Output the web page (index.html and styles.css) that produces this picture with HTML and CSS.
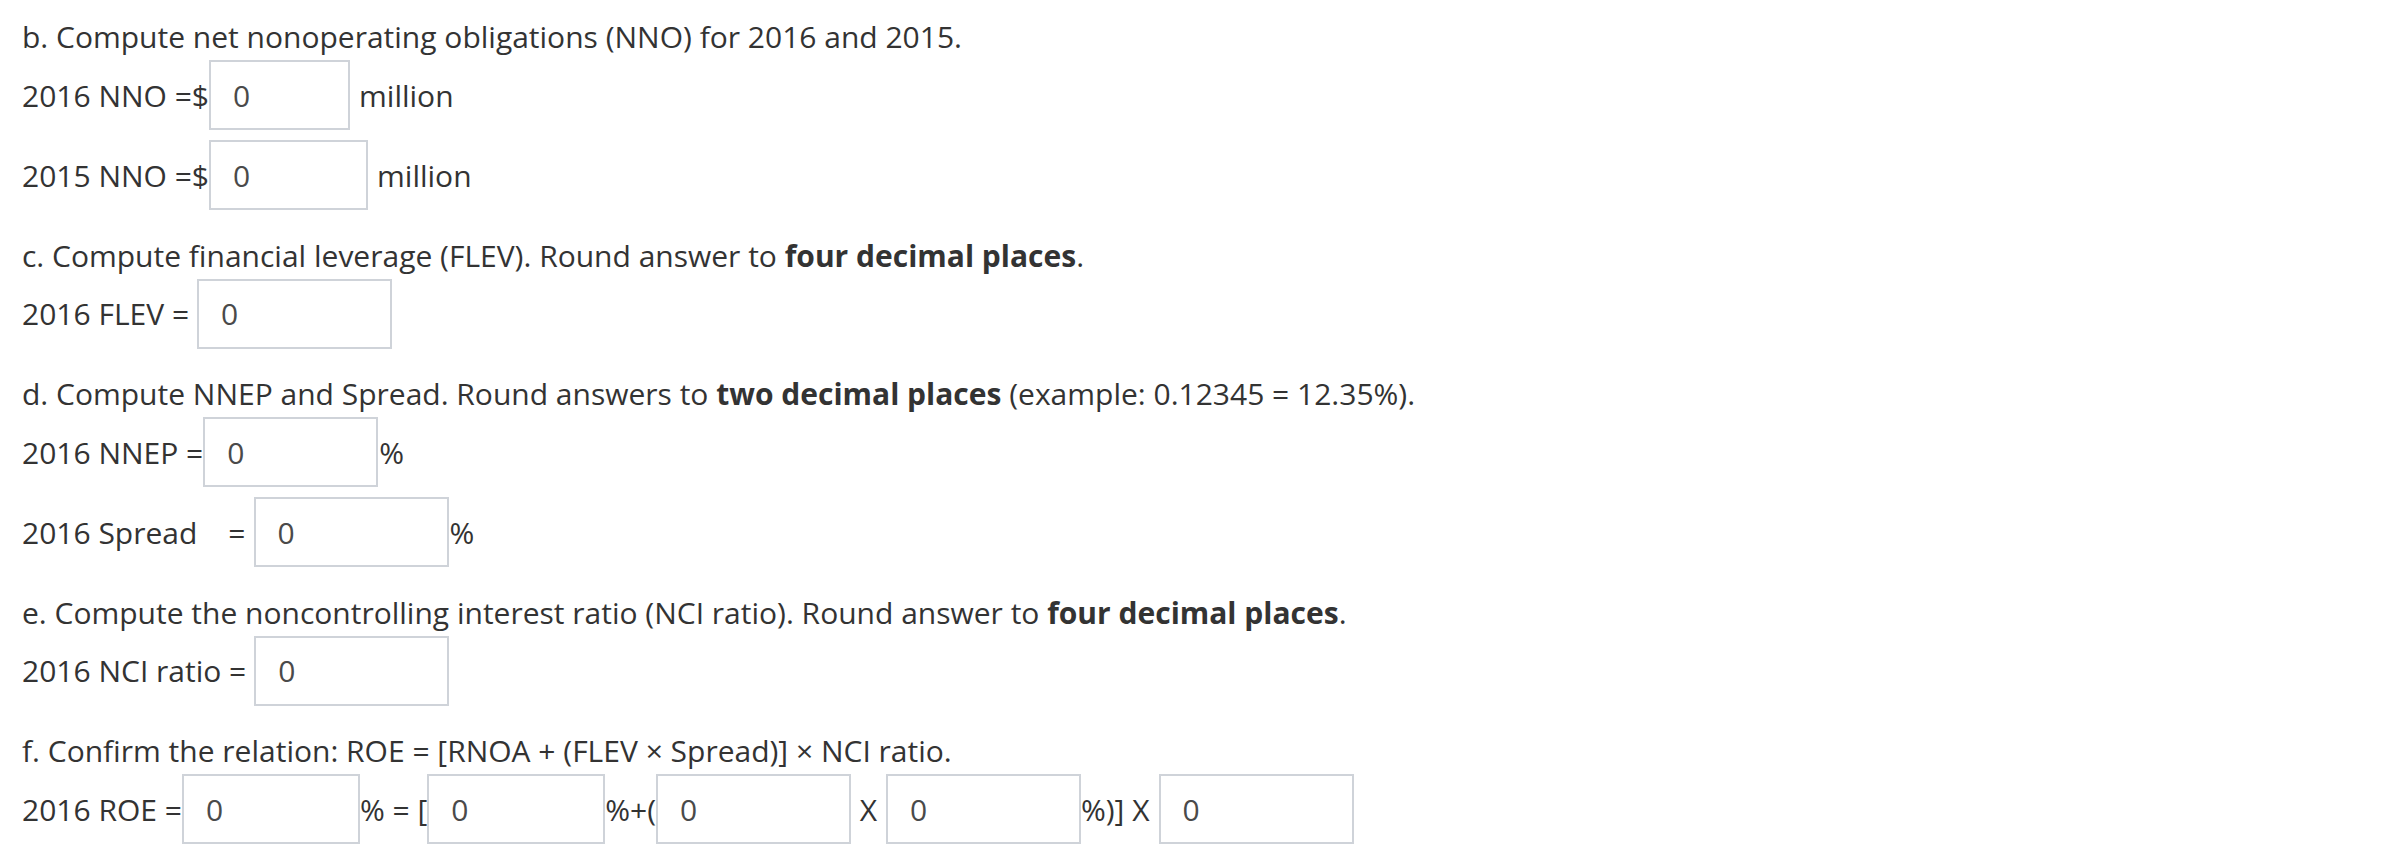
FILE: index.html
```html
<!DOCTYPE html>
<html>
<head>
<meta charset="utf-8">
<link rel="stylesheet" href="styles.css">
</head>
<body>
<div class="page">
  <section class="part">
    <div class="q">b. Compute net nonoperating obligations (NNO) for 2016 and 2015.</div>
    <div class="row"><span class="lbl">2016 NNO =$</span><input class="box w141" value="0"><span class="after">million</span></div>
    <div class="row"><span class="lbl">2015 NNO =$</span><input class="box w159" value="0"><span class="after">million</span></div>
  </section>
  <section class="part">
    <div class="q">c. Compute financial leverage (FLEV). Round answer to <b>four decimal places</b>.</div>
    <div class="row"><span class="lbl">2016 FLEV =</span><input class="box w195 gap" value="0"></div>
  </section>
  <section class="part">
    <div class="q">d. Compute NNEP and Spread. Round answers to <b>two decimal places</b> (example: 0.12345 = 12.35%).</div>
    <div class="row"><span class="lbl">2016 NNEP =</span><input class="box w175" value="0"><span class="after0">%</span></div>
    <div class="row"><span class="lbl">2016 Spread</span><span class="eq">=</span><input class="box w195 gap" value="0"><span class="after0">%</span></div>
  </section>
  <section class="part">
    <div class="q">e. Compute the noncontrolling interest ratio (NCI ratio). Round answer to <b>four decimal places</b>.</div>
    <div class="row"><span class="lbl">2016 NCI ratio =</span><input class="box w195 gap" value="0"></div>
  </section>
  <section class="part">
    <div class="q">f. Confirm the relation: ROE = [RNOA + (FLEV × Spread)] × NCI ratio.</div>
    <div class="row"><span class="lbl">2016 ROE =</span><input class="box w178" value="0"><span class="mid">% = [</span><input class="box w178" value="0"><span class="mid">%+(</span><input class="box w195" value="0"><span class="mid x">&nbsp;X&nbsp;</span><input class="box w195" value="0"><span class="mid last">%)] X</span><input class="box w195" value="0"></div>
  </section>
</div>
</body>
</html>
```

FILE: styles.css
```css
html, body {
  margin: 0;
  padding: 0;
  background: #ffffff;
}

.page {
  padding: 17px 0 0 22px;
  font-family: "Open Sans", "Noto Sans", sans-serif;
  font-size: 30px;
  color: #333333;
  display: flex;
  flex-direction: column;
  gap: 25.5px;
}

.part {
  display: flex;
  flex-direction: column;
  gap: 10px;
}

.q {
  line-height: 40px;
  height: 40px;
  margin-bottom: -7px;
  white-space: nowrap;
}

.q b {
  font-weight: 700;
}

.row {
  display: flex;
  align-items: center;
  height: 70px;
  white-space: pre;
}

.box {
  box-sizing: border-box;
  flex: none;
  height: 70px;
  border: 2px solid #cfd3d9;
  border-radius: 0;
  background: #ffffff;
  font-family: inherit;
  font-size: 30px;
  color: #4a4a4a;
  padding: 0 22px;
  margin: 0;
  outline: none;
}

.box.gap { margin-left: 8px; }

.w141 { width: 141px; }
.w159 { width: 159px; }
.w175 { width: 175px; }
.w178 { width: 178px; }
.w195 { width: 195px; }

.eq { margin-left: 31px; }

.after { margin-left: 9px; }
.after0 { margin-left: 1px; }

.mid { margin: 0; }
.mid.x { margin: 0 1px; }
.mid.last { margin-right: 9px; }
```
